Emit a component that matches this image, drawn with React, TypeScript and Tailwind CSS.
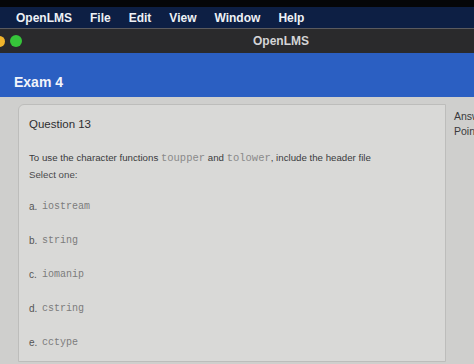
import React from 'react';

const options = [
  { key: 'a', text: 'iostream' },
  { key: 'b', text: 'string' },
  { key: 'c', text: 'iomanip' },
  { key: 'd', text: 'cstring' },
  { key: 'e', text: 'cctype' },
];

const menu = ['File', 'Edit', 'View', 'Window', 'Help'];

const App: React.FC = () => {
  return (
    <div className="w-[474px] h-[364px] overflow-hidden flex flex-col bg-[#d3d3d1] font-['Liberation_Sans',Arial,sans-serif]">
      {/* bezel */}
      <div className="h-[7px] bg-[#050608] shrink-0" />

      {/* menu bar */}
      <div className="h-[21px] shrink-0 bg-[#0d1f44] flex items-center pl-[16px] gap-[18px] text-[12px] font-bold text-[#eef1f6]">
        <span>OpenLMS</span>
        {menu.map((m) => (
          <span key={m}>{m}</span>
        ))}
      </div>

      {/* window title bar */}
      <div className="h-[25px] shrink-0 bg-[#2a2a2c] border-t border-[#5a5a5e] flex items-center">
        <div className="w-[11px] h-[11px] rounded-full bg-[#f2b52c] ml-[-6px]" />
        <div className="w-[12px] h-[12px] rounded-full bg-[#36c53a] ml-[5px]" />
        <span className="ml-[231px] text-[12px] font-bold text-[#d4d4d6]">OpenLMS</span>
      </div>

      {/* page header */}
      <div className="h-[44px] shrink-0 bg-[#2b5fc2] flex items-end pl-[14px] pb-[4px]">
        <span className="text-[14px] font-bold text-[#f2f4fa]">Exam 4</span>
      </div>

      {/* content */}
      <div className="flex-1 flex pt-[7px] pl-[18px] bg-[#cfcfcd]">
        <div className="w-[428px] h-[258px] shrink-0 rounded-tl-[6px] border-l border-t border-r border-b border-[#bdbdbb] bg-[#d9d9d7] pl-[10px] pt-[12px] text-[#2e2e30]">
          <div className="text-[11.5px] leading-[14px]">Question 13</div>
          <div className="mt-[20px] text-[9.7px] leading-[13px] text-[#3a3a3c] whitespace-nowrap">
            To use the character functions{' '}
            <span className="font-['Liberation_Mono',monospace] text-[10.5px] text-[#8a8a8a]">toupper</span> and{' '}
            <span className="font-['Liberation_Mono',monospace] text-[10.5px] text-[#8a8a8a]">tolower</span>, include the header file
          </div>
          <div className="mt-[3px] text-[9.7px] leading-[13px] text-[#4a4a4c]">Select one:</div>
          <div className="mt-[19px] flex flex-col gap-[21px]">
            {options.map((o) => (
              <div key={o.key} className="flex items-center h-[13px]">
                <span className="w-[13px] text-[10px] text-[#555]">{o.key}.</span>
                <span className="font-['Liberation_Mono',monospace] text-[10px] text-[#7c7c7c]">{o.text}</span>
              </div>
            ))}
          </div>
        </div>
        <div className="pl-[8px] pt-[5px] text-[10.5px] leading-[15px] text-[#3a3a3c] whitespace-nowrap">
          <div>Answer</div>
          <div>Points</div>
        </div>
      </div>
    </div>
  );
};

export default App;
